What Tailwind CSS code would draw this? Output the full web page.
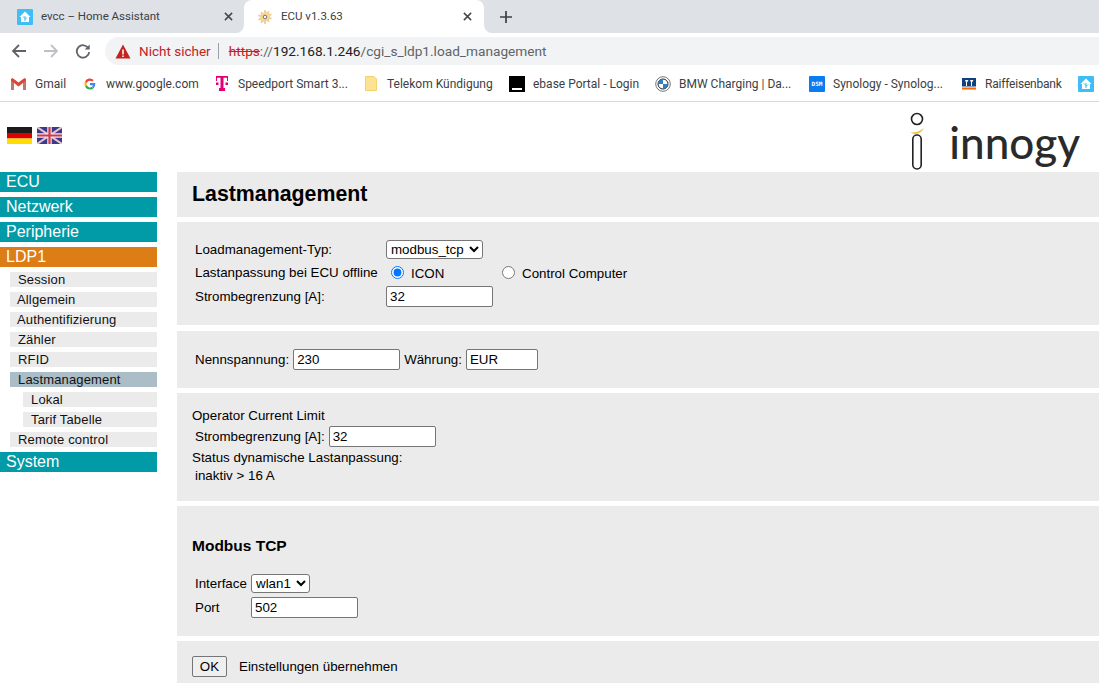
<!DOCTYPE html>
<html lang="de">
<head>
<meta charset="utf-8">
<title>ECU v1.3.63</title>
<script src="https://cdn.jsdelivr.net/npm/@tailwindcss/browser@4"></script>
</head>
<body class="w-[1099px] h-[683px] overflow-hidden bg-white font-['Liberation_Sans',sans-serif] text-[13.33px] text-black">
<!-- Tab strip -->
<header class="h-[33px] bg-[#dee1e6] flex items-stretch font-['Roboto',sans-serif] text-[11.5px] text-[#3c4043]">
  <div class="w-[244px] flex items-center pl-[17px] pr-[11px]">
    <svg class="w-4 h-4 shrink-0" viewBox="0 0 16 16"><rect width="16" height="16" rx="1" fill="#41bdf5"/><path d="M8 2.500 2.500 8H4v5h8V8h1.500z" fill="#fff"/><path d="M8 12V7M8 9.500 6 7.500M8 10.500l2-2" stroke="#41bdf5" fill="none"/></svg>
    <span class="ml-[8px] flex-1">evcc – Home Assistant</span>
    <svg class="w-[9px] h-[9px]" viewBox="0 0 10 10"><path d="M1 1l8 8M9 1 1 9" stroke="#45484c" stroke-width="1.700"/></svg>
  </div>
  <div class="relative w-[240px] bg-white rounded-t-[8px] flex items-center pl-[13px] pr-[12px]">
    <svg class="absolute -left-[8px] bottom-0 w-[8px] h-[8px]" viewBox="0 0 8 8"><path d="M8 0v8H0a8 8 0 0 0 8-8z" fill="#fff"/></svg>
    <svg class="absolute -right-[8px] bottom-0 w-[8px] h-[8px]" viewBox="0 0 8 8"><path d="M0 0v8h8a8 8 0 0 1-8-8z" fill="#fff"/></svg>
    <svg class="w-4 h-4 shrink-0" viewBox="0 0 16 16"><path d="M8 1l1.300 3 2.600-1.800-.5 3.100 3.100-.1-2.200 2.300 2.200 2.300-3.100-.1.5 3.100-2.600-1.800L8 15l-1.300-3-2.600 1.800.5-3.100-3.100.1 2.200-2.300L1.500 6.200l3.100.1-.5-3.100L6.700 5z" fill="#f7d9a0" stroke="#eeb760" stroke-width=".6"/><circle cx="8" cy="8" r="1.800" fill="#fff" stroke="#555" stroke-width=".8"/></svg>
    <span class="ml-[8px] flex-1">ECU v1.3.63</span>
    <svg class="w-[9px] h-[9px]" viewBox="0 0 10 10"><path d="M1 1l8 8M9 1 1 9" stroke="#45484c" stroke-width="1.700"/></svg>
  </div>
  <div class="flex items-center ml-[16px]">
    <svg class="w-[12px] h-[12px]" viewBox="0 0 12 12"><path d="M6 0v12M0 6h12" stroke="#3c4043" stroke-width="1.700"/></svg>
  </div>
</header>
<!-- Toolbar -->
<div class="h-[36px] bg-white flex items-center pl-[11px] font-['Roboto',sans-serif]">
  <svg class="w-[16px] h-[16px]" viewBox="0 0 16 16"><path d="M15 8H2M8 2 2 8l6 6" stroke="#5f6368" stroke-width="1.800" fill="none"/></svg>
  <svg class="w-[16px] h-[16px] ml-[16px]" viewBox="0 0 16 16"><path d="M1 8h13M8 2l6 6-6 6" stroke="#bdc1c6" stroke-width="1.800" fill="none"/></svg>
  <svg class="w-[16px] h-[16px] ml-[16px]" viewBox="0 0 16 16"><path d="M13.500 5.500A6.200 6.200 0 1 0 14.200 9" stroke="#5f6368" stroke-width="1.800" fill="none"/><path d="M14.700 1.500v5h-5z" fill="#5f6368"/></svg>
  <div class="ml-[14px] w-[994px] h-[28px] bg-[#f1f3f4] rounded-l-full flex items-center pl-[10px] text-[13.67px]">
    <svg class="w-[16px] h-[15px]" viewBox="0 0 16 15"><path d="M8 .5 15.500 14.500H.5z" fill="#c5221f"/><path d="M8 5.500v5M8 11.500v1.500" stroke="#fff" stroke-width="1.500"/></svg>
    <span class="ml-[8px] text-[#c5221f] text-[13.500px]">Nicht sicher</span>
    <span class="ml-[7px] w-px h-[16px] bg-[#9aa0a6]"></span>
    <span class="ml-[10px] text-[#5f6368]"><span class="line-through text-[#c5221f]">https</span>://<span class="text-[#202124]">192.168.1.246</span>/cgi_s_ldp1.load_management</span>
  </div>
</div>
<!-- Bookmarks -->
<nav class="h-[33px] pb-[3px] bg-white border-b border-[#d8dadd] flex items-center font-['Roboto',sans-serif] text-[12px] text-[#3c4043] whitespace-nowrap">
  <div class="flex items-center ml-[11px] w-[73px] gap-[9px]">
    <svg class="w-[15px] h-[12px] shrink-0" viewBox="0 0 15 12"><path d="M0 1v11h3V5l4.500 3.500L12 5v7h3V1l-1.500-1-6 4.500L1.500 0z" fill="#d9483b"/><path d="M3 12V5L0 2.500V12zM12 12V5l3-2.500V12z" fill="#a5a5a5" opacity=".5"/></svg><span>Gmail</span>
  </div>
  <div class="flex items-center w-[132px] gap-[10px]">
    <svg class="w-[12px] h-[12px] shrink-0" viewBox="0 0 16 16"><path d="M15 8.200c0-.6 0-1-.1-1.500H8v2.800h4a3.400 3.400 0 0 1-1.500 2.200l2.300 1.800A7 7 0 0 0 15 8.200z" fill="#4285f4"/><path d="M8 15.200c2 0 3.600-.6 4.800-1.700l-2.300-1.800A4.400 4.400 0 0 1 3.800 9.400L1.400 11.200A7.200 7.200 0 0 0 8 15.200z" fill="#34a853"/><path d="M3.800 9.400a4.300 4.300 0 0 1 0-2.800L1.400 4.800a7.200 7.200 0 0 0 0 6.400z" fill="#fbbc05"/><path d="M8 3.600c1.100 0 2 .4 2.800 1.100l2-2A7 7 0 0 0 1.400 4.800l2.400 1.800A4.300 4.300 0 0 1 8 3.600z" fill="#ea4335"/></svg><span>www.google.com</span>
  </div>
  <div class="flex items-center w-[149px] gap-[10px]">
    <svg class="w-[12px] h-[15px] shrink-0" viewBox="0 0 12 15"><path d="M0 0h12v5h-1V1.800H7.500V12h1.500v3H3v-3h1.500V1.800H1V5H0z" fill="#e20074"/><rect y="6.500" width="2.500" height="2.500" fill="#e20074"/><rect x="9.500" y="6.500" width="2.500" height="2.500" fill="#e20074"/></svg><span>Speedport Smart 3...</span>
  </div>
  <div class="flex items-center w-[144px] gap-[10px]">
    <svg class="w-[12px] h-[15px] shrink-0" viewBox="0 0 12 15"><path d="M.5.5h8.500l2.500 2.500v11.500H.5z" fill="#fde293" stroke="#f3d26e"/></svg><span>Telekom Kündigung</span>
  </div>
  <div class="flex items-center w-[146px] gap-[8px]">
    <svg class="w-[16px] h-[16px] shrink-0" viewBox="0 0 16 16"><rect width="16" height="16" fill="#000"/><rect x="3" y="12" width="10" height="2" fill="#fff"/></svg><span>ebase Portal - Login</span>
  </div>
  <div class="flex items-center w-[154px] gap-[8px]">
    <svg class="w-[16px] h-[16px] shrink-0" viewBox="0 0 16 16"><circle cx="8" cy="8" r="7.300" fill="#fff" stroke="#777"/><circle cx="8" cy="8" r="5" fill="#fff" stroke="#222"/><path d="M8 8V3a5 5 0 0 0-5 5zM8 8v5a5 5 0 0 0 5-5z" fill="#2f7fc1"/></svg><span>BMW Charging | Da...</span>
  </div>
  <div class="flex items-center w-[153px] gap-[8px]">
    <span class="w-[16px] h-[16px] shrink-0 rounded-[1px] bg-[#0a7cf0] text-white font-['DejaVu_Sans_Mono',monospace] font-bold text-[6px] leading-[16px] text-center">DSM</span><span>Synology - Synolog...</span>
  </div>
  <div class="flex items-center w-[116px] gap-[9px]">
    <svg class="w-[14px] h-[13px] shrink-0" viewBox="0 0 14 13"><rect y="1" width="14" height="8.500" fill="#12407f"/><rect y="10.500" width="14" height="2" fill="#f60"/><path d="M3 3h3.500L5 5.500V9H4V5.500zM8 3h3.500L10 5.500V9H9V5.500z" fill="#fff"/></svg><span class="tracking-[-0.2px]">Raiffeisenbank</span>
  </div>
  <svg class="w-[16px] h-[16px] shrink-0" viewBox="0 0 16 16"><rect width="16" height="16" rx="1" fill="#41bdf5"/><path d="M8 2.500 2.500 8H4v5h8V8h1.500z" fill="#fff"/><path d="M8 12V7M8 9.500 6 7.500M8 10.500l2-2" stroke="#41bdf5" fill="none"/></svg>
</nav>
<!-- Page header -->
<div class="h-[70px] flex items-start justify-between">
  <div class="flex gap-[5px] pl-[7px] pt-[25px]">
    <svg class="w-[25px] h-[17px]" viewBox="0 0 25 17"><rect width="25" height="6" fill="#1c1a1a"/><rect y="6" width="25" height="5.500" fill="#dd0000"/><rect y="11.500" width="25" height="5.500" fill="#ffdd00"/></svg>
    <svg class="w-[25px] h-[17px]" viewBox="0 0 25 17"><rect width="25" height="17" fill="#3a3a8c"/><path d="M0 0l25 17M25 0 0 17" stroke="#e7c5cf" stroke-width="2"/><path d="M12.500 0v17M0 8.500h25" stroke="#f4e6ea" stroke-width="4.500"/><path d="M12.500 0v17M0 8.500h25" stroke="#cf3a4f" stroke-width="2.200"/></svg>
  </div>
  <div class="flex items-start pr-[19px] pt-[10px]">
    <svg class="w-[18px] h-[58px] mr-[23px]" viewBox="0 0 18 58"><circle cx="9" cy="7" r="5.500" fill="none" stroke="#222" stroke-width="1.600"/><path d="M1 20q7 2 15-4-3 6-10 6z" fill="#f1c232"/><rect x="4.800" y="23" width="8.400" height="34" rx="4.200" fill="none" stroke="#222" stroke-width="1.600"/></svg>
    <span class="font-['Lato',sans-serif] font-medium text-[44px] leading-[46px] mt-[7px] text-[#2a2a2a]">innogy</span>
  </div>
</div>
<!-- Body -->
<div class="flex gap-[20px] items-start">
  <aside class="w-[157px] shrink-0 flex flex-col gap-[5px]">
    <a class="h-[20px] bg-[#009ba7] text-white text-[16px] leading-[19px] pl-[6px]">ECU</a>
    <a class="h-[20px] bg-[#009ba7] text-white text-[16px] leading-[19px] pl-[6px]">Netzwerk</a>
    <a class="h-[20px] bg-[#009ba7] text-white text-[16px] leading-[19px] pl-[6px]">Peripherie</a>
    <a class="h-[20px] bg-[#dc7d15] text-white text-[16px] leading-[19px] pl-[6px]">LDP1</a>
    <a class="h-[15px] ml-[10px] bg-[#ebebeb] text-[#111] text-[13px] leading-[15px] pl-[8px] tracking-[0.15px]">Session</a>
    <a class="h-[15px] ml-[10px] bg-[#ebebeb] text-[#111] text-[13px] leading-[15px] pl-[7px] tracking-[0.15px]">Allgemein</a>
    <a class="h-[15px] ml-[10px] bg-[#ebebeb] text-[#111] text-[13px] leading-[15px] pl-[7px] tracking-[0.15px]">Authentifizierung</a>
    <a class="h-[15px] ml-[10px] bg-[#ebebeb] text-[#111] text-[13px] leading-[15px] pl-[8px] tracking-[0.15px]">Zähler</a>
    <a class="h-[15px] ml-[10px] bg-[#ebebeb] text-[#111] text-[13px] leading-[15px] pl-[8px] tracking-[0.15px]">RFID</a>
    <a class="h-[15px] ml-[10px] bg-[#abbdc6] text-[#111] text-[13px] leading-[15px] pl-[8px] tracking-[0.15px]">Lastmanagement</a>
    <a class="h-[15px] ml-[23px] bg-[#ebebeb] text-[#111] text-[13px] leading-[15px] pl-[8px] tracking-[0.15px]">Lokal</a>
    <a class="h-[15px] ml-[23px] bg-[#ebebeb] text-[#111] text-[13px] leading-[15px] pl-[8px] tracking-[0.15px]">Tarif Tabelle</a>
    <a class="h-[15px] ml-[10px] bg-[#ebebeb] text-[#111] text-[13px] leading-[15px] pl-[8px] tracking-[0.15px]">Remote control</a>
    <a class="h-[20px] bg-[#009ba7] text-white text-[16px] leading-[19px] pl-[6px]">System</a>
  </aside>
  <main class="flex-1 flex flex-col">
    <section class="h-[45px] bg-[#ebebeb] pl-[15px] flex items-start">
      <h1 class="text-[21.33px] font-bold leading-[44px]">Lastmanagement</h1>
    </section>
    <section class="h-[103px] mt-[5px] bg-[#ebebeb] pl-[18px] pt-[18px]">
      <div class="flex items-center h-[19px]">
        <span class="w-[191px]">Loadmanagement-Typ:</span>
        <select class="w-[97px] h-[19px] bg-white border border-[#767676] rounded-[3px] text-[13.33px]"><option>modbus_tcp</option></select>
      </div>
      <div class="flex items-center h-[27px]">
        <span class="w-[196px]">Lastanpassung bei ECU offline</span>
        <input type="radio" name="o" checked class="w-[13px] h-[13px] m-0">
        <span class="ml-[7px] w-[91px] mt-[2px]">ICON</span>
        <input type="radio" name="o" class="w-[13px] h-[13px] m-0">
        <span class="ml-[7px] mt-[2px]">Control Computer</span>
      </div>
      <div class="flex items-center h-[21px]">
        <span class="w-[191px]">Strombegrenzung [A]:</span>
        <input value="32" class="w-[107px] h-[21px] bg-white border border-[#767676] rounded-[2px] px-[3px] text-[13.33px]">
      </div>
    </section>
    <section class="h-[57px] mt-[6px] bg-[#ebebeb] pl-[18px] pt-[18px] flex items-start">
      <span class="leading-[21px]">Nennspannung:</span>
      <input value="230" class="ml-[4px] w-[107px] h-[21px] bg-white border border-[#767676] rounded-[2px] px-[3px] text-[13.33px]">
      <span class="ml-[4px] leading-[21px]">Währung:</span>
      <input value="EUR" class="ml-[4px] w-[72px] h-[21px] bg-white border border-[#767676] rounded-[2px] px-[3px] text-[13.33px]">
    </section>
    <section class="h-[108px] mt-[5px] bg-[#ebebeb] pl-[15px] pt-[15px]">
      <p class="leading-[16px]">Operator Current Limit</p>
      <div class="flex items-center h-[21px] mt-[2px] pl-[3px]">
        <span>Strombegrenzung [A]:</span>
        <input value="32" class="ml-[4px] w-[107px] h-[21px] bg-white border border-[#767676] rounded-[2px] px-[3px] text-[13.33px]">
      </div>
      <p class="leading-[16px] mt-[3px]">Status dynamische Lastanpassung:</p>
      <p class="leading-[16px] mt-[2px] pl-[3px]">inaktiv &gt; 16 A</p>
    </section>
    <section class="h-[130px] mt-[5px] bg-[#ebebeb] pl-[15px] pt-[31px]">
      <h2 class="text-[15.5px] font-bold leading-[18px]">Modbus TCP</h2>
      <div class="flex items-center h-[19px] mt-[19px] pl-[3px]">
        <span class="w-[56px]">Interface</span>
        <select class="w-[59px] h-[19px] bg-white border border-[#767676] rounded-[3px] text-[13.33px]"><option>wlan1</option></select>
      </div>
      <div class="flex items-center h-[21px] mt-[4px] pl-[3px]">
        <span class="w-[56px]">Port</span>
        <input value="502" class="w-[107px] h-[21px] bg-white border border-[#767676] rounded-[2px] px-[3px] text-[13.33px]">
      </div>
    </section>
    <section class="h-[42px] mt-[5px] bg-[#ebebeb] pl-[15px] pt-[15px] flex items-start">
      <button class="w-[35px] h-[21px] bg-[#efefef] border border-[#767676] rounded-[2px] text-[13.33px] leading-[18px]">OK</button>
      <span class="ml-[12px] leading-[21px]">Einstellungen übernehmen</span>
    </section>
  </main>
</div>
</body>
</html>
